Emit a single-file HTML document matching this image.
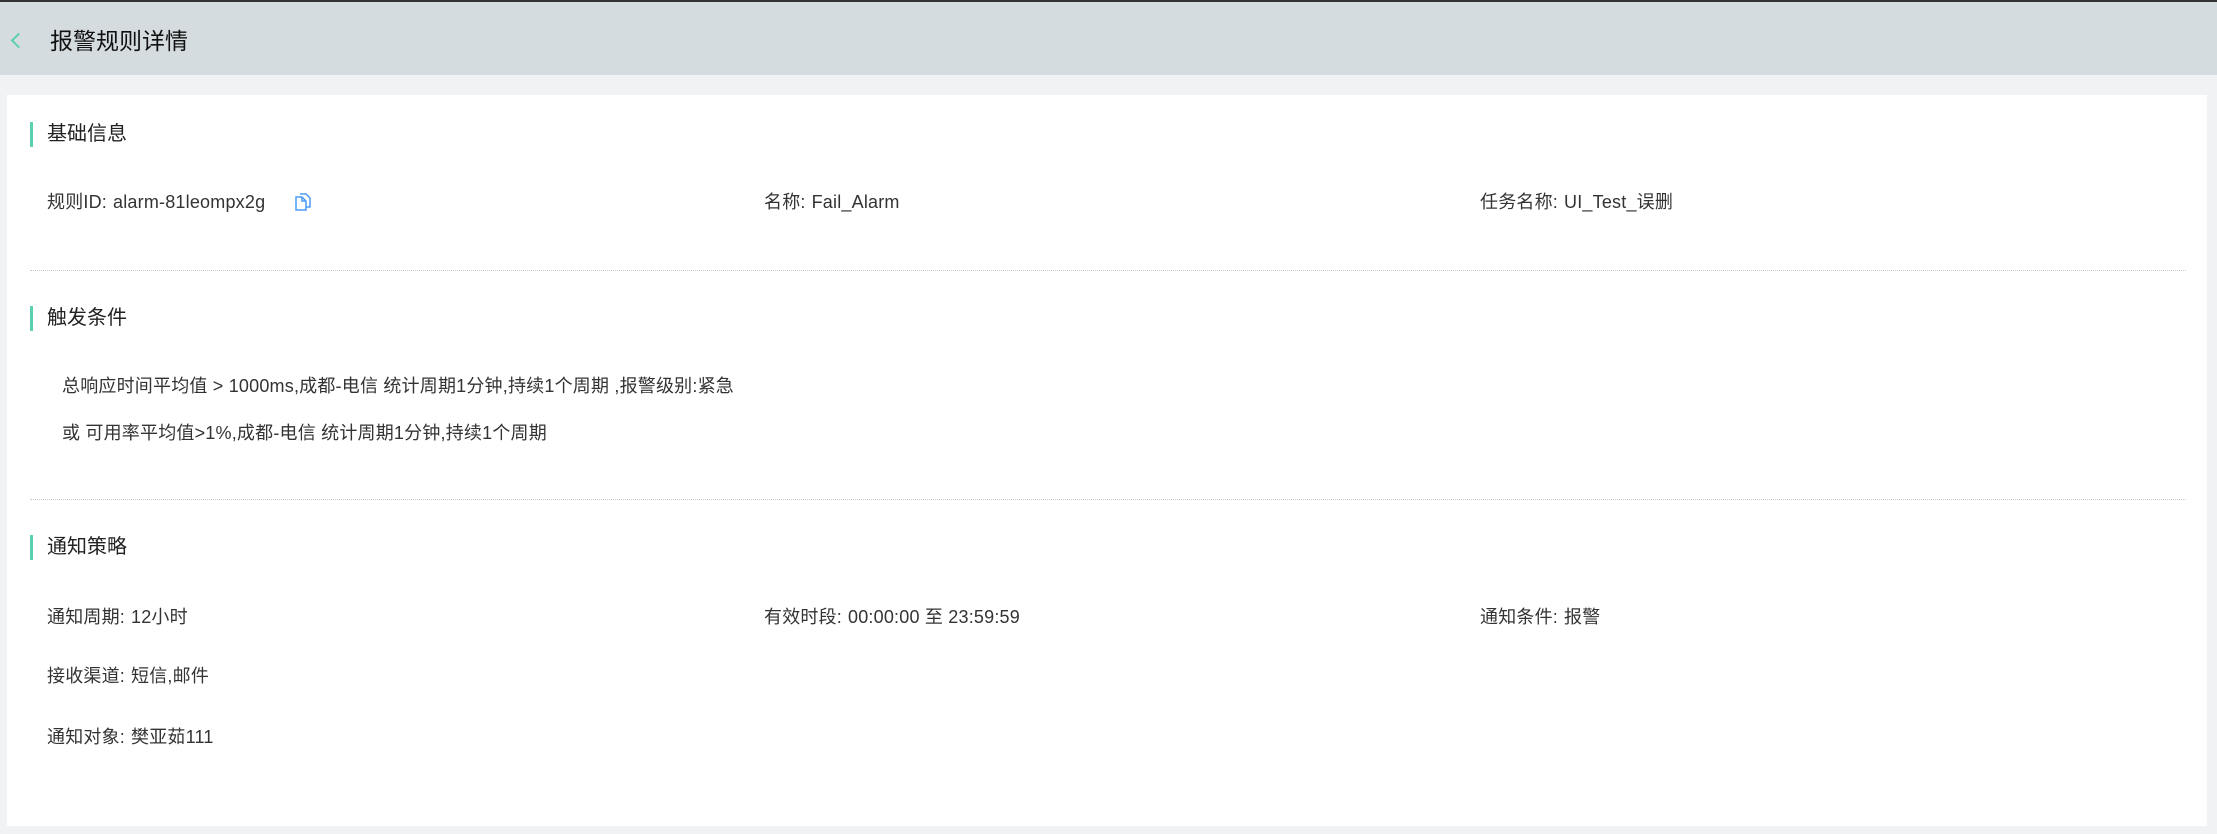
<!DOCTYPE html>
<html><head><meta charset="utf-8"><style>
*{margin:0;padding:0;box-sizing:border-box}
body{width:2217px;height:834px;background:#f1f2f4;font-family:"Liberation Sans","Noto Sans CJK SC",sans-serif;color:#333;position:relative;overflow:hidden}
.hdr{position:absolute;left:0;top:0;width:2217px;height:75px;background:#d5dce0;border-top:2px solid #333}
.hdr .t{position:absolute;left:50px;top:20px;font-size:23px;color:#111}
.arr{position:absolute;left:13px;top:33px;width:11px;height:11px;border-left:2.5px solid #5ccfb0;border-bottom:2.5px solid #5ccfb0;transform:rotate(45deg)}
.card{position:absolute;left:7px;top:95px;width:2200px;height:731px;background:#fff}
.sec{position:absolute;left:30px;height:25px;border-left:3px solid #5ccfb0;padding-left:14px;font-size:20px;line-height:25px;color:#222}
.tx{position:absolute;font-size:18px;line-height:22px;white-space:nowrap;letter-spacing:0.2px}
.tx b{font-weight:normal;margin-left:6px}
.hr{position:absolute;left:30px;width:2156px;border-top:1.5px dotted #ccc}
</style></head><body>
<div class="hdr"><div class="arr"></div><div class="t">报警规则详情</div></div>
<div class="card"></div>
<div class="sec" style="top:122px">基础信息</div>
<div class="tx" style="left:47px;top:191px">规则ID:<b>alarm-81leompx2g</b></div>
<svg style="position:absolute;left:293px;top:192px" width="20" height="20" viewBox="0 0 20 20" fill="none" stroke="#4a9cf5" stroke-width="1.5"><path d="M7 2h6l4 4v9H13"/><path d="M3 5h6l4 4v9H3z"/><path d="M9 5v4h4"/></svg>
<div class="tx" style="left:764px;top:191px">名称:<b>Fail_Alarm</b></div>
<div class="tx" style="left:1480px;top:191px">任务名称:<b>UI_Test_误删</b></div>
<div class="hr" style="top:270px"></div>
<div class="sec" style="top:306px">触发条件</div>
<div class="tx" style="left:62px;top:375px">总响应时间平均值 &gt; 1000ms,成都-电信 统计周期1分钟,持续1个周期 ,报警级别:紧急</div>
<div class="tx" style="left:62px;top:422px">或 可用率平均值&gt;1%,成都-电信 统计周期1分钟,持续1个周期</div>
<div class="hr" style="top:499px"></div>
<div class="sec" style="top:535px">通知策略</div>
<div class="tx" style="left:47px;top:606px">通知周期:<b>12小时</b></div>
<div class="tx" style="left:764px;top:606px">有效时段:<b>00:00:00 至 23:59:59</b></div>
<div class="tx" style="left:1480px;top:606px">通知条件:<b>报警</b></div>
<div class="tx" style="left:47px;top:665px">接收渠道:<b>短信,邮件</b></div>
<div class="tx" style="left:47px;top:726px">通知对象:<b>樊亚茹111</b></div>
</body></html>
